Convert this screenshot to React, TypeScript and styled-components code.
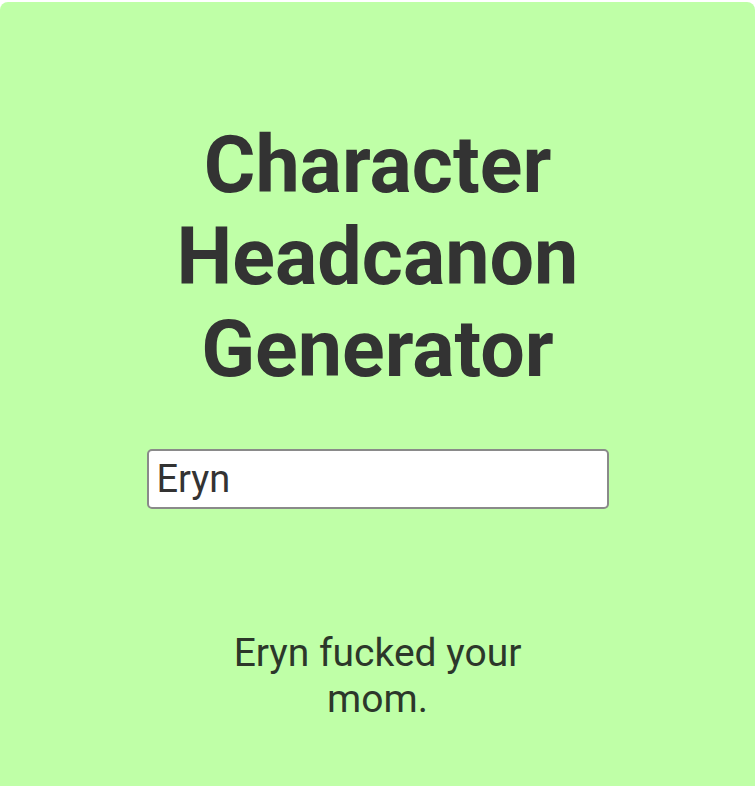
import React, { useState } from "react";
import styled, { createGlobalStyle } from "styled-components";

const GlobalStyle = createGlobalStyle`
  html, body {
    margin: 0;
    padding: 0;
    background: #ffffff;
  }
  body {
    font-family: Roboto, "Noto Sans", "Liberation Sans", sans-serif;
  }
`;

const Page = styled.main`
  margin-top: 2px;
  min-height: 784px;
  box-sizing: border-box;
  background: #bfffa7;
  border-radius: 8px 8px 0 0;
  display: flex;
  flex-direction: column;
  align-items: center;
  padding-top: 117px;
`;

const Title = styled.h1`
  margin: 0;
  width: 420px;
  text-align: center;
  font-family: Roboto, "Noto Sans", sans-serif;
  font-weight: 700;
  font-size: 79px;
  line-height: 92px;
  color: #333333;
`;

const NameInput = styled.input`
  margin-top: 54px;
  width: 462px;
  height: 60px;
  box-sizing: border-box;
  border: 2px solid #8a8a8a;
  border-radius: 5px;
  background: #ffffff;
  padding: 0 8px;
  font-family: Roboto, "Noto Sans", sans-serif;
  font-size: 38px;
  color: #333333;
  outline: none;
`;

const Result = styled.p`
  margin: 121px 0 0;
  width: 320px;
  text-align: center;
  font-family: Roboto, "Noto Sans", sans-serif;
  font-size: 39px;
  line-height: 46px;
  color: #2c372a;
`;

export default function App() {
  const [name, setName] = useState("Eryn");
  return (
    <>
      <GlobalStyle />
      <Page>
        <Title>Character Headcanon Generator</Title>
        <NameInput value={name} onChange={(e) => setName(e.target.value)} />
        <Result>{name} fucked your mom.</Result>
      </Page>
    </>
  );
}
